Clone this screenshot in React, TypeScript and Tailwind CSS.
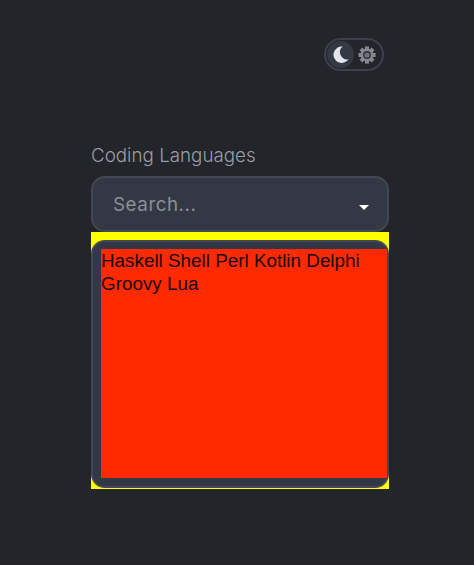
function MoonIcon() {
  return (
    <svg viewBox="0 0 16 17" className="w-[16px] h-[17px]">
      <path d="M9.6 0.6A8.2 8.2 0 1 0 15.6 13.2A7.2 7.2 0 0 1 9.6 0.6Z" fill="#e4e5e8" />
    </svg>
  );
}

function GearIcon() {
  const teeth = [0, 45, 90, 135, 180, 225, 270, 315];
  return (
    <svg viewBox="0 0 18 18" className="w-[18px] h-[18px]">
      {teeth.map((a) => (
        <rect key={a} x="7" y="0.4" width="4" height="4" fill="#85888f" transform={`rotate(${a} 9 9)`} />
      ))}
      <circle cx="9" cy="9" r="6.4" fill="#85888f" />
      <circle cx="9" cy="9" r="3.9" fill="#2b2e36" />
      <circle cx="9" cy="9" r="2.6" fill="#6f727a" />
    </svg>
  );
}

export default function App() {
  return (
    <div className="min-h-[565px] bg-[#23252b] flex flex-col font-['Inter',sans-serif]">
      <div className="flex justify-end pt-[38px] pr-[90px]">
        <div className="w-[60px] h-[33px] rounded-full border-2 border-[#3b404c] flex items-center pl-[1px]">
          <div className="w-[27px] h-[27px] rounded-full bg-[#343944] flex items-center justify-center">
            <MoonIcon />
          </div>
          <div className="ml-[4px] flex">
            <GearIcon />
          </div>
        </div>
      </div>

      <div className="mt-[73px] ml-[91px] w-[298px]">
        <div className="text-[18.8px] leading-[24px] font-light text-[#9a9da5]">Coding Languages</div>
        <div className="mt-[8px] h-[56px] rounded-[14px] border-2 border-[#424753] bg-[#333844] flex items-center justify-between pl-[20px] pr-[18px]">
          <span className="mt-[2px] text-[18.8px] tracking-[0.55px] text-[#8b8f99]">Search...</span>
          <div className="mt-[6px] w-0 h-0 border-x-[5px] border-x-transparent border-t-[5px] border-t-white" />
        </div>
        <div className="bg-[#ffff00] h-[257px] pt-[8px]">
          <div className="h-[248px] rounded-[14px] bg-[#333844] border-2 border-[#424753] pt-[7px] pl-[8px] pb-[8px]">
            <div className="h-[229px] bg-[#ff2a00] font-['Liberation_Sans',sans-serif] text-[18.85px] leading-[23px] text-[#1a0500]">
              Haskell Shell Perl Kotlin Delphi Groovy Lua
            </div>
          </div>
        </div>
      </div>
    </div>
  );
}
